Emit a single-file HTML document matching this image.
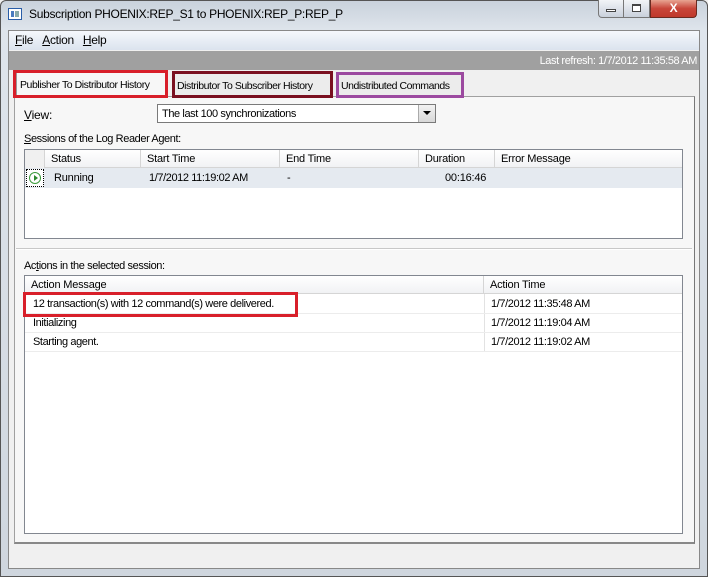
<!DOCTYPE html>
<html><head><style>
*{margin:0;padding:0;box-sizing:border-box}
body{width:708px;height:577px;overflow:hidden;font-family:"Liberation Sans",sans-serif;font-size:11px;letter-spacing:-0.2px;color:#000;position:relative;background:#f0f0f0}
.a{position:absolute}
.frame{left:0;top:0;width:708px;height:577px;background:linear-gradient(#c9d2dc,#dfe5ec 30px,#cfd6de);border:1px solid #555;border-radius:6px 6px 0 0}
.t{white-space:nowrap}
.tab{font-size:10.5px;letter-spacing:-0.45px}
.hdr{background:linear-gradient(#fff,#f1f2f4);border-bottom:1px solid #d5d5d5}
.hc{position:absolute;top:0;height:18px;border-right:1px solid #d5d5d5;padding:3px 6px;white-space:nowrap}
</style></head><body>
<div class="a frame"></div>
<div class="a" style="left:8px;top:8px;width:14px;height:12px;background:#fff;border:1px solid #2a5ea8"><div style="margin:2px;height:6px;background:linear-gradient(90deg,#4a7cc0 40%,#fff 40%,#fff 50%,#8aa 50%)"></div></div>
<div class="a t" style="left:29px;top:7px;font-size:12px;letter-spacing:-0.3px">Subscription PHOENIX:REP_S1 to PHOENIX:REP_P:REP_P</div>
<div class="a" style="left:598px;top:0;width:26px;height:18px;border:1px solid #777;border-top:0;border-radius:0 0 0 4px;background:linear-gradient(#f2f4f7,#c9d1dc)"><div style="margin:9px 7px 0;height:3px;background:#fff;border:1px solid #444"></div></div>
<div class="a" style="left:624px;top:0;width:26px;height:18px;border:1px solid #777;border-top:0;border-left:0;background:linear-gradient(#f2f4f7,#c9d1dc)"><div style="margin:4px 8px 0;height:8px;border:1px solid #444;border-top-width:2px;background:#fff"></div></div>
<div class="a" style="left:650px;top:0;width:47px;height:18px;border:1px solid #6b2a20;border-top:0;border-radius:0 0 4px 0;background:linear-gradient(#e8a492,#c8463a 50%,#c0392b);color:#fff;font-weight:bold;text-align:center;font-size:12px;line-height:17px">X</div>
<div class="a" style="left:8px;top:30px;width:692px;height:539px;background:#f0f0f0;border:1px solid #888"></div>
<div class="a" style="left:9px;top:31px;width:690px;height:19px;background:linear-gradient(#f5f8fc,#dbe3ee)"></div>
<div class="a t" style="left:15px;top:33px;font-size:12px;letter-spacing:-0.3px"><u>F</u>ile&nbsp;&nbsp;&nbsp;<u>A</u>ction&nbsp;&nbsp;&nbsp;<u>H</u>elp</div>
<div class="a" style="left:9px;top:51px;width:690px;height:19px;background:#a0a0a0"></div>
<div class="a t" style="right:11px;top:55px;color:#fff;letter-spacing:-0.4px">Last refresh: 1/7/2012 11:35:58 AM</div>
<div class="a" style="left:14px;top:96px;width:681px;height:448px;background:#f7f7f7;border:1px solid #a0a0a0;border-right-color:#777;border-bottom:2px solid #888"></div>
<div class="a t tab" style="left:16px;top:72px;width:150px;height:25px;background:#f7f7f7;border:1px solid #999;border-bottom:0;padding:6px 3px">Publisher To Distributor History</div>
<div class="a t tab" style="left:174px;top:74px;width:157px;height:22px;background:#ececec;padding:6px 3px">Distributor To Subscriber History</div>
<div class="a t tab" style="left:338px;top:74px;width:124px;height:22px;background:#ececec;padding:6px 3px">Undistributed Commands</div>
<div class="a" style="left:13px;top:70px;width:155px;height:28px;border:3px solid #d81f2a"></div>
<div class="a" style="left:172px;top:71px;width:161px;height:27px;border:3px solid #7a1020"></div>
<div class="a" style="left:336px;top:72px;width:128px;height:26px;border:3px solid #9c4aa0"></div>
<div class="a t" style="left:24px;top:108px;font-size:12px"><u>V</u>iew:</div>
<div class="a t" style="left:157px;top:104px;width:279px;height:19px;background:#fff;border:1px solid #7a7a7a;padding:3px 4px;letter-spacing:-0.4px">The last 100 synchronizations</div>
<div class="a" style="left:418px;top:105px;width:17px;height:17px;background:linear-gradient(#f2f2f2,#d8d8d8);border-left:1px solid #aaa"><div style="margin:6px 4px;border:4px solid transparent;border-top:4px solid #000;width:0"></div></div>
<div class="a t" style="left:24px;top:133px;letter-spacing:-0.4px"><u>S</u>essions of the Log Reader Agent:</div>
<div class="a" style="left:24px;top:149px;width:659px;height:90px;background:#fff;border:1px solid #828790">
 <div class="hdr" style="position:relative;height:18px">
  <div class="hc" style="left:0;width:20px;background:#f0f0f0"></div>
  <div class="hc" style="left:20px;width:96px">Status</div>
  <div class="hc" style="left:116px;width:139px">Start Time</div>
  <div class="hc" style="left:255px;width:139px">End Time</div>
  <div class="hc" style="left:394px;width:76px">Duration</div>
  <div class="hc" style="left:470px;width:188px;border-right:0">Error Message</div>
 </div>
 <div style="position:relative;height:20px;background:#e5eaf0">
  <div style="position:absolute;left:1px;top:1px;width:18px;height:18px;border:1px dotted #000;background:#fff"><div style="margin:2px;width:12px;height:12px;border:1px solid #3a9a3a;border-radius:50%"><div style="margin:2px 0 0 4px;border:3px solid transparent;border-left:4px solid #2d8a2d;width:0"></div></div></div>
  <div class="a t" style="left:29px;top:4px">Running</div>
  <div class="a t" style="left:124px;top:4px;letter-spacing:-0.4px">1/7/2012 11:19:02 AM</div>
  <div class="a t" style="left:262px;top:4px">-</div>
  <div class="a t" style="left:420px;top:4px">00:16:46</div>
 </div>
</div>
<div class="a" style="left:16px;top:248px;width:676px;height:2px;border-top:1px solid #c8c8c8;border-bottom:1px solid #fff"></div>
<div class="a t" style="left:24px;top:260px;letter-spacing:-0.4px">Ac<u>t</u>ions in the selected session:</div>
<div class="a" style="left:24px;top:275px;width:659px;height:259px;background:#fff;border:1px solid #828790">
 <div class="hdr" style="position:relative;height:18px">
  <div class="hc" style="left:0;width:459px">Action Message</div>
  <div class="hc" style="left:459px;width:198px;border-right:0">Action Time</div>
 </div>
 <div style="position:relative;height:76px;letter-spacing:-0.4px">
  <div class="a" style="left:459px;top:0;width:1px;height:57px;background:#e2e2e2"></div>
  <div class="a" style="left:0;top:19px;width:657px;height:1px;background:#ececec"></div>
  <div class="a" style="left:0;top:38px;width:657px;height:1px;background:#ececec"></div>
  <div class="a" style="left:0;top:57px;width:657px;height:1px;background:#ececec"></div>
  <div class="a t" style="left:8px;top:4px">12 transaction(s) with 12 command(s) were delivered.</div>
  <div class="a t" style="left:466px;top:4px">1/7/2012 11:35:48 AM</div>
  <div class="a t" style="left:8px;top:23px">Initializing</div>
  <div class="a t" style="left:466px;top:23px">1/7/2012 11:19:04 AM</div>
  <div class="a t" style="left:8px;top:42px">Starting agent.</div>
  <div class="a t" style="left:466px;top:42px">1/7/2012 11:19:02 AM</div>
 </div>
</div>
<div class="a" style="left:23px;top:292px;width:275px;height:25px;border:3px solid #d81f2a"></div>
</body></html>
